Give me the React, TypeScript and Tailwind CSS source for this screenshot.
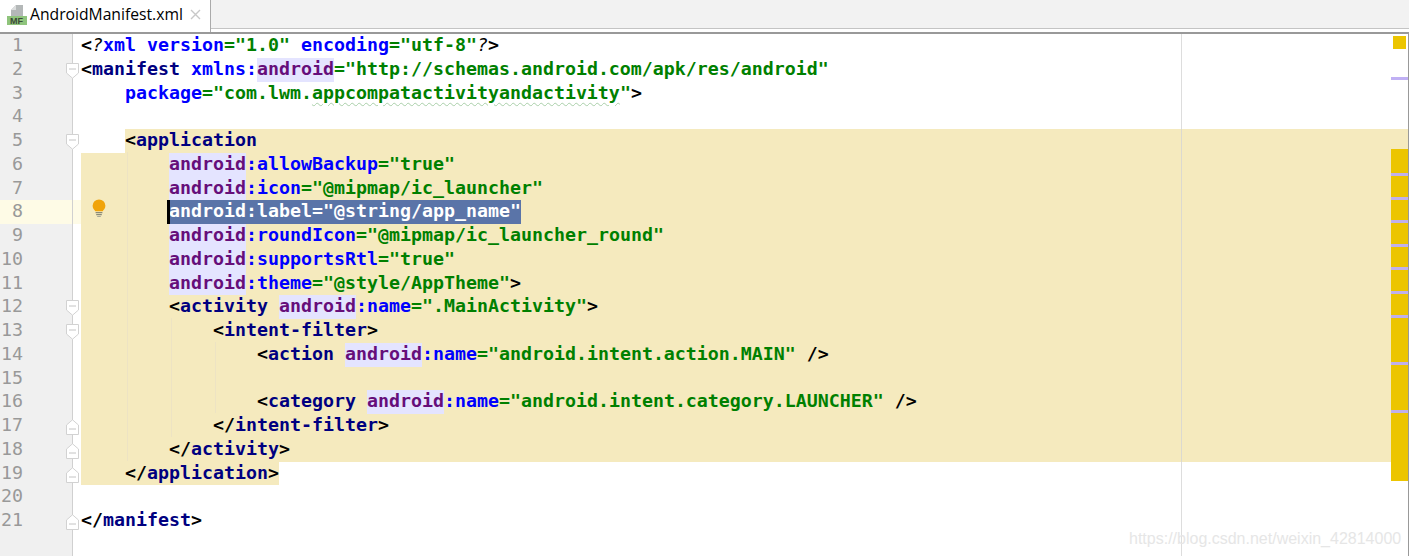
import React from 'react';

const Delim = ({ children }: { children: React.ReactNode }) => <span className="text-black">{children}</span>;
const Tag = ({ children }: { children: React.ReactNode }) => <span className="text-[#000080]">{children}</span>;
const Name = ({ children }: { children: React.ReactNode }) => <span className="text-[#0000ff]">{children}</span>;
const Value = ({ children }: { children: React.ReactNode }) => <span className="text-[#008000]">{children}</span>;
const Ns = () => <span className="inline-block h-[23.75px] bg-[#e4e4ff] text-[#660e7a]">android</span>;

const Open = ({ name }: { name: string }) => (
  <>
    <Delim>{'<'}</Delim>
    <Tag>{name}</Tag>
  </>
);

const Close = ({ name }: { name: string }) => (
  <>
    <Delim>{'</'}</Delim>
    <Tag>{name}</Tag>
    <Delim>{'>'}</Delim>
  </>
);

const Attr = ({ name, value }: { name: string; value: string }) => (
  <>
    <Ns />
    <Name>:{name}</Name>
    <Value>="{value}"</Value>
  </>
);

const FoldMarker = ({ up }: { up?: boolean }) => (
  <svg className="absolute left-[65px] top-[5px]" width="15" height="16" viewBox="0 0 15 16">
    <path
      d={up ? 'M1.5 15.5V6L7.5.8 13.5 6v9.5z' : 'M1.5.5V10l6 5.2 6-5.2V.5z'}
      fill="#fff"
      stroke="#d2d2d2"
    />
    <path d={up ? 'M4 10h7' : 'M4 6h7'} stroke="#c4c4c4" />
  </svg>
);

type RowProps = {
  n: number;
  fold?: 'open' | 'close';
  current?: boolean;
  band?: 'full' | 'inset' | 'fit';
  children?: React.ReactNode;
};

const Row = ({ n, fold, current, band, children }: RowProps) => (
  <div className="flex h-[23.75px] shrink-0">
    <div
      className={`relative w-[73px] shrink-0 border-r border-[#d0d0d0] pr-[49px] text-right font-normal text-[#999999] ${
        current ? 'bg-[#fefbe6]' : 'bg-[#f0f0f0]'
      }`}
    >
      {n}
      {fold && <FoldMarker up={fold === 'close'} />}
    </div>
    <div className={`w-[8px] shrink-0 ${current ? 'bg-[#fefbe6]' : ''}`} />
    <div
      className={`whitespace-pre ${band === 'full' ? 'flex-1 bg-[#f5eabe]' : ''} ${
        band === 'inset' ? 'ml-[44px] flex-1 bg-[#f5eabe]' : ''
      } ${band === 'fit' ? 'bg-[#f5eabe]' : ''}`}
    >
      {children}
    </div>
  </div>
);

const Bulb = () => (
  <svg className="absolute left-[92px] top-[165px]" width="14" height="19" viewBox="0 0 14 19">
    <path d="M7 .4a6.4 6.4 0 0 0-6.4 6.4c0 2.7 1.7 4 2.7 5.4h7.4c1-1.4 2.7-2.7 2.7-5.4A6.4 6.4 0 0 0 7 .4z" fill="#f0a30a" />
    <path d="M3.6 13.6h6.8M4.2 15.6h5.6" stroke="#8a8a78" strokeWidth="1.2" />
    <path d="M5.2 17.5h3.6" stroke="#a8a898" strokeWidth="1" />
  </svg>
);

const Yellow = ({ h }: { h: string }) => <div className={`w-full bg-[#ecc500] ${h}`} />;
const Mark = () => <div className="h-[3px] w-full bg-[#c0b0ec]" />;

const ErrorStripe = () => (
  <div className="absolute bottom-0 right-0 top-0 flex w-[17px] flex-col">
    <div className="ml-[2px] mt-[2px] h-[13px] w-[13px] shrink-0 bg-[#ecc500]" />
    <div className="mt-[28px] h-[3px] w-full bg-[#c0b0f4]" />
    <div className="mt-[69px] flex flex-col">
      <Yellow h="h-[24px]" />
      <Mark />
      <Yellow h="h-[21px]" />
      <Mark />
      <Yellow h="h-[20px]" />
      <Mark />
      <Yellow h="h-[21px]" />
      <Mark />
      <Yellow h="h-[20px]" />
      <Mark />
      <Yellow h="h-[21px]" />
      <Mark />
      <Yellow h="h-[21px]" />
      <Mark />
      <Yellow h="h-[44px]" />
      <Mark />
      <Yellow h="h-[45px]" />
      <Mark />
      <Yellow h="h-[68px]" />
    </div>
  </div>
);

export default function App() {
  return (
    <div className="flex h-screen w-full flex-col overflow-hidden bg-white font-['DejaVu_Sans_Mono',monospace] text-[18.27px] font-bold leading-[22px]">
      {/* Tab strip */}
      <div className="flex h-[34px] shrink-0 border-b-2 border-[#999999]">
        <div className="flex w-[211px] shrink-0 items-start border-r border-[#aaaaaa] pl-[7px] pt-[4px] font-['Open_Sans',sans-serif] text-[15.7px] font-normal leading-[21px] text-black">
          <svg className="mt-[1px] shrink-0" width="20" height="20" viewBox="0 0 20 20">
            <path d="M9 0h7v11H4V5z" fill="#b4b8b8" />
            <path d="M9 0v5H4z" fill="#dcdede" />
            <rect x="0" y="11" width="20" height="9" fill="#8fc47c" />
            <text x="3" y="19" fontFamily="'Liberation Sans', sans-serif" fontSize="9" fontWeight="700" fill="#3c4a38">
              MF
            </text>
          </svg>
          <span className="ml-[3px]">AndroidManifest.xml</span>
          <svg className="ml-[7px] mt-[5px] shrink-0" width="11" height="11" viewBox="0 0 11 11">
            <path d="M1 1l9 9M10 1l-9 9" stroke="#c8c8c8" strokeWidth="1.4" />
          </svg>
        </div>
        <div className="flex-1">
          <div className="h-[29px] border-b border-[#c4c4c4] bg-[#f2f2f2]" />
        </div>
      </div>

      {/* Editor */}
      <div className="relative flex flex-1 flex-col overflow-hidden border-r border-[#999999]">
        <Row n={1}>
          <Delim>{'<'}</Delim>
          <span className="font-normal italic text-black">?</span>
          <Name>xml version</Name>
          <Value>="1.0"</Value> <Name>encoding</Name>
          <Value>="utf-8"</Value>
          <span className="font-normal italic text-black">?</span>
          <Delim>{'>'}</Delim>
        </Row>
        <Row n={2} fold="open">
          <Open name="manifest" /> <Name>xmlns:</Name>
          <Ns />
          <Value>="http://schemas.android.com/apk/res/android"</Value>
        </Row>
        <Row n={3}>
          {'    '}
          <Name>package</Name>
          <Value>
            ="com.lwm.
            <span className="underline decoration-[#a9cfa9] decoration-wavy decoration-1 underline-offset-[3px]">
              appcompatactivityandactivity
            </span>
            "
          </Value>
          <Delim>{'>'}</Delim>
        </Row>
        <Row n={4} />
        <Row n={5} fold="open" band="inset">
          <Open name="application" />
        </Row>
        <Row n={6} band="full">
          {'        '}
          <Attr name="allowBackup" value="true" />
        </Row>
        <Row n={7} band="full">
          {'        '}
          <Attr name="icon" value="@mipmap/ic_launcher" />
        </Row>
        <Row n={8} band="full" current>
          {'        '}
          <span className="relative inline-block h-[23.75px] bg-[#5a74a8] text-white">
            <span className="absolute -left-[2px] top-0 h-full w-[3px] bg-black" />
            android:label="@string/app_name"
          </span>
        </Row>
        <Row n={9} band="full">
          {'        '}
          <Attr name="roundIcon" value="@mipmap/ic_launcher_round" />
        </Row>
        <Row n={10} band="full">
          {'        '}
          <Attr name="supportsRtl" value="true" />
        </Row>
        <Row n={11} band="full">
          {'        '}
          <Attr name="theme" value="@style/AppTheme" />
          <Delim>{'>'}</Delim>
        </Row>
        <Row n={12} fold="open" band="full">
          {'        '}
          <Open name="activity" /> <Attr name="name" value=".MainActivity" />
          <Delim>{'>'}</Delim>
        </Row>
        <Row n={13} fold="open" band="full">
          {'            '}
          <Open name="intent-filter" />
          <Delim>{'>'}</Delim>
        </Row>
        <Row n={14} band="full">
          {'                '}
          <Open name="action" /> <Attr name="name" value="android.intent.action.MAIN" />{' '}
          <Delim>{'/>'}</Delim>
        </Row>
        <Row n={15} band="full" />
        <Row n={16} band="full">
          {'                '}
          <Open name="category" /> <Attr name="name" value="android.intent.category.LAUNCHER" />{' '}
          <Delim>{'/>'}</Delim>
        </Row>
        <Row n={17} fold="close" band="full">
          {'            '}
          <Close name="intent-filter" />
        </Row>
        <Row n={18} fold="close" band="full">
          {'        '}
          <Close name="activity" />
        </Row>
        <Row n={19} fold="close" band="fit">
          {'    '}
          <Close name="application" />
        </Row>
        <Row n={20} />
        <Row n={21} fold="close">
          <Close name="manifest" />
        </Row>
        <div className="flex flex-1">
          <div className="w-[73px] border-r border-[#d0d0d0] bg-[#f0f0f0]" />
        </div>

        {/* Indent guides and right margin */}
        <div className="absolute left-[127px] top-[118px] h-[309px] w-px bg-[#ede3c3]" />
        <div className="absolute left-[171px] top-[284px] h-[119px] w-px bg-[#ede3c3]" />
        <div className="absolute left-[215px] top-[308px] h-[71px] w-px bg-[#ede3c3]" />
        <div className="absolute bottom-0 left-[1181px] top-0 w-px bg-[#d4d4d4]/80" />

        <Bulb />
        <ErrorStripe />

        <div className="absolute left-[1129px] top-[495px] font-['Liberation_Sans',sans-serif] text-[16px] font-normal leading-[20px] text-[#e6e6e6]">
          https://blog.csdn.net/weixin_42814000
        </div>
      </div>
    </div>
  );
}
